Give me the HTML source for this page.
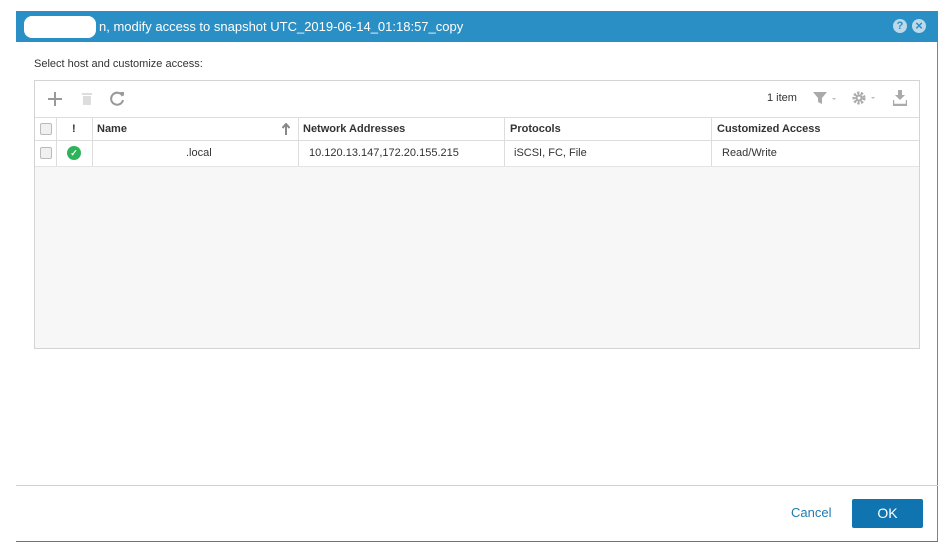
<!DOCTYPE html><html><head><style>
body{margin:0;width:948px;height:552px;background:#fff;font-family:"Liberation Sans",sans-serif;position:relative;overflow:hidden}
.a{position:absolute}
.title{left:16px;top:11px;width:922px;height:31px;background:#2a8fc4;color:#fff;font-size:13px;line-height:31px}
.grid{left:34px;top:80px;width:884px;height:267px;border:1px solid #d4d4d4;background:#f7f7f7}
.th{font-size:11px;font-weight:bold;color:#333;line-height:22px}
.td{font-size:11px;color:#333;line-height:25px}
.vl{width:1px;background:#ddd}
.cb{width:10px;height:10px;border:1px solid #bbb;border-radius:2px;background:#f0f0f0}
</style></head><body>
<div class="a title"><span style="position:absolute;left:8px;top:5px;width:72px;height:22px;background:#fff;border-radius:8px"></span><span style="position:absolute;left:83px">n, modify access to snapshot UTC_2019-06-14_01:18:57_copy</span>
<span style="position:absolute;left:877px;top:8px;width:14px;height:14px;border-radius:7px;background:#bcd9ea;color:#2a8fc4;font-size:11px;line-height:14px;text-align:center;font-weight:bold">?</span>
<span style="position:absolute;left:896px;top:8px;width:14px;height:14px;border-radius:7px;background:#bcd9ea;color:#2a8fc4;font-size:13px;line-height:14px;text-align:center;font-weight:bold">×</span></div>
<div class="a" style="left:937px;top:42px;width:1px;height:500px;background:#5a8fb0"></div>
<div class="a" style="left:16px;top:541px;width:922px;height:1px;background:#4d7d9c"></div>
<div class="a" style="left:16px;top:485px;width:922px;height:1px;background:#d0d0d0"></div>
<div class="a" style="left:34px;top:58px;font-size:11px;color:#333">Select host and customize access:</div>
<div class="a grid">
 <div class="a" style="left:0;top:0;width:884px;height:36px;background:#fff;border-bottom:1px solid #ddd"></div>
 <svg class="a" style="left:13px;top:11px" width="14" height="14"><path d="M7 0V14M0 7H14" stroke="#999" stroke-width="2"/></svg>
 <svg class="a" style="left:47px;top:11px" width="10" height="13"><rect x="0" y="1" width="10" height="2" fill="#ddd"/><rect x="1" y="4" width="8" height="9" fill="#ddd"/></svg>
 <svg class="a" style="left:75px;top:10px" width="15" height="15"><path d="M12.5 5A6 6 0 1 0 13 9" fill="none" stroke="#999" stroke-width="2"/><path d="M10 1L14 1L14 5Z" fill="#999"/></svg>
 <div class="a" style="left:732px;top:11px;font-size:11px;color:#333">1 item</div>
 <svg class="a" style="left:778px;top:11px" width="26" height="13"><path d="M0 0H14L9 6V12L5 10V6Z" fill="#aaa"/><path d="M19 6H23L21 8Z" fill="#bbb"/></svg>
 <svg class="a" style="left:817px;top:10px" width="26" height="15"><circle cx="7" cy="7" r="5" fill="none" stroke="#aaa" stroke-width="3" stroke-dasharray="2.2 1.4"/><circle cx="7" cy="7" r="3.5" fill="#aaa"/><circle cx="7" cy="7" r="1.5" fill="#fff"/><path d="M19 6H23L21 8Z" fill="#bbb"/></svg>
 <svg class="a" style="left:858px;top:9px" width="14" height="16"><path d="M5 0H9V5H12L7 10L2 5H5Z" fill="#aaa"/><path d="M0 10V15H14V10" fill="none" stroke="#aaa" stroke-width="2.5"/></svg>
 <div class="a" style="left:0;top:37px;width:884px;height:22px;background:#fff;border-bottom:1px solid #ddd"></div>
 <div class="a" style="left:0;top:60px;width:884px;height:25px;background:#fff;border-bottom:1px solid #e4e4e4"></div>
 <div class="a vl" style="left:21px;top:37px;height:48px"></div>
 <div class="a vl" style="left:57px;top:37px;height:48px"></div>
 <div class="a vl" style="left:263px;top:37px;height:48px"></div>
 <div class="a vl" style="left:469px;top:37px;height:48px"></div>
 <div class="a vl" style="left:676px;top:37px;height:48px"></div>
 <div class="a cb" style="left:5px;top:42px"></div>
 <div class="a cb" style="left:5px;top:66px"></div>
 <div class="a th" style="left:37px;top:37px">!</div>
 <div class="a th" style="left:62px;top:37px">Name</div>
 <svg class="a" style="left:247px;top:42px" width="8" height="12"><path d="M4 1V12M0.5 5L4 1L7.5 5" fill="none" stroke="#888" stroke-width="2"/></svg>
 <div class="a th" style="left:268px;top:37px">Network Addresses</div>
 <div class="a th" style="left:475px;top:37px">Protocols</div>
 <div class="a th" style="left:682px;top:37px">Customized Access</div>
 <div class="a" style="left:32px;top:65px;width:14px;height:14px;border-radius:7px;background:#2fb35a;color:#fff;font-size:9px;line-height:14px;text-align:center;font-weight:bold">✓</div>
 <div class="a td" style="left:151px;top:60px">.local</div>
 <div class="a td" style="left:274px;top:60px">10.120.13.147,172.20.155.215</div>
 <div class="a td" style="left:479px;top:60px">iSCSI, FC, File</div>
 <div class="a td" style="left:687px;top:60px">Read/Write</div>
</div>
<div class="a" style="left:791px;top:505px;font-size:13px;color:#1f7bb0">Cancel</div>
<div class="a" style="left:852px;top:499px;width:71px;height:29px;background:#0f74b0;border-radius:2px;color:#fff;font-size:14px;line-height:29px;text-align:center">OK</div>
</body></html>
